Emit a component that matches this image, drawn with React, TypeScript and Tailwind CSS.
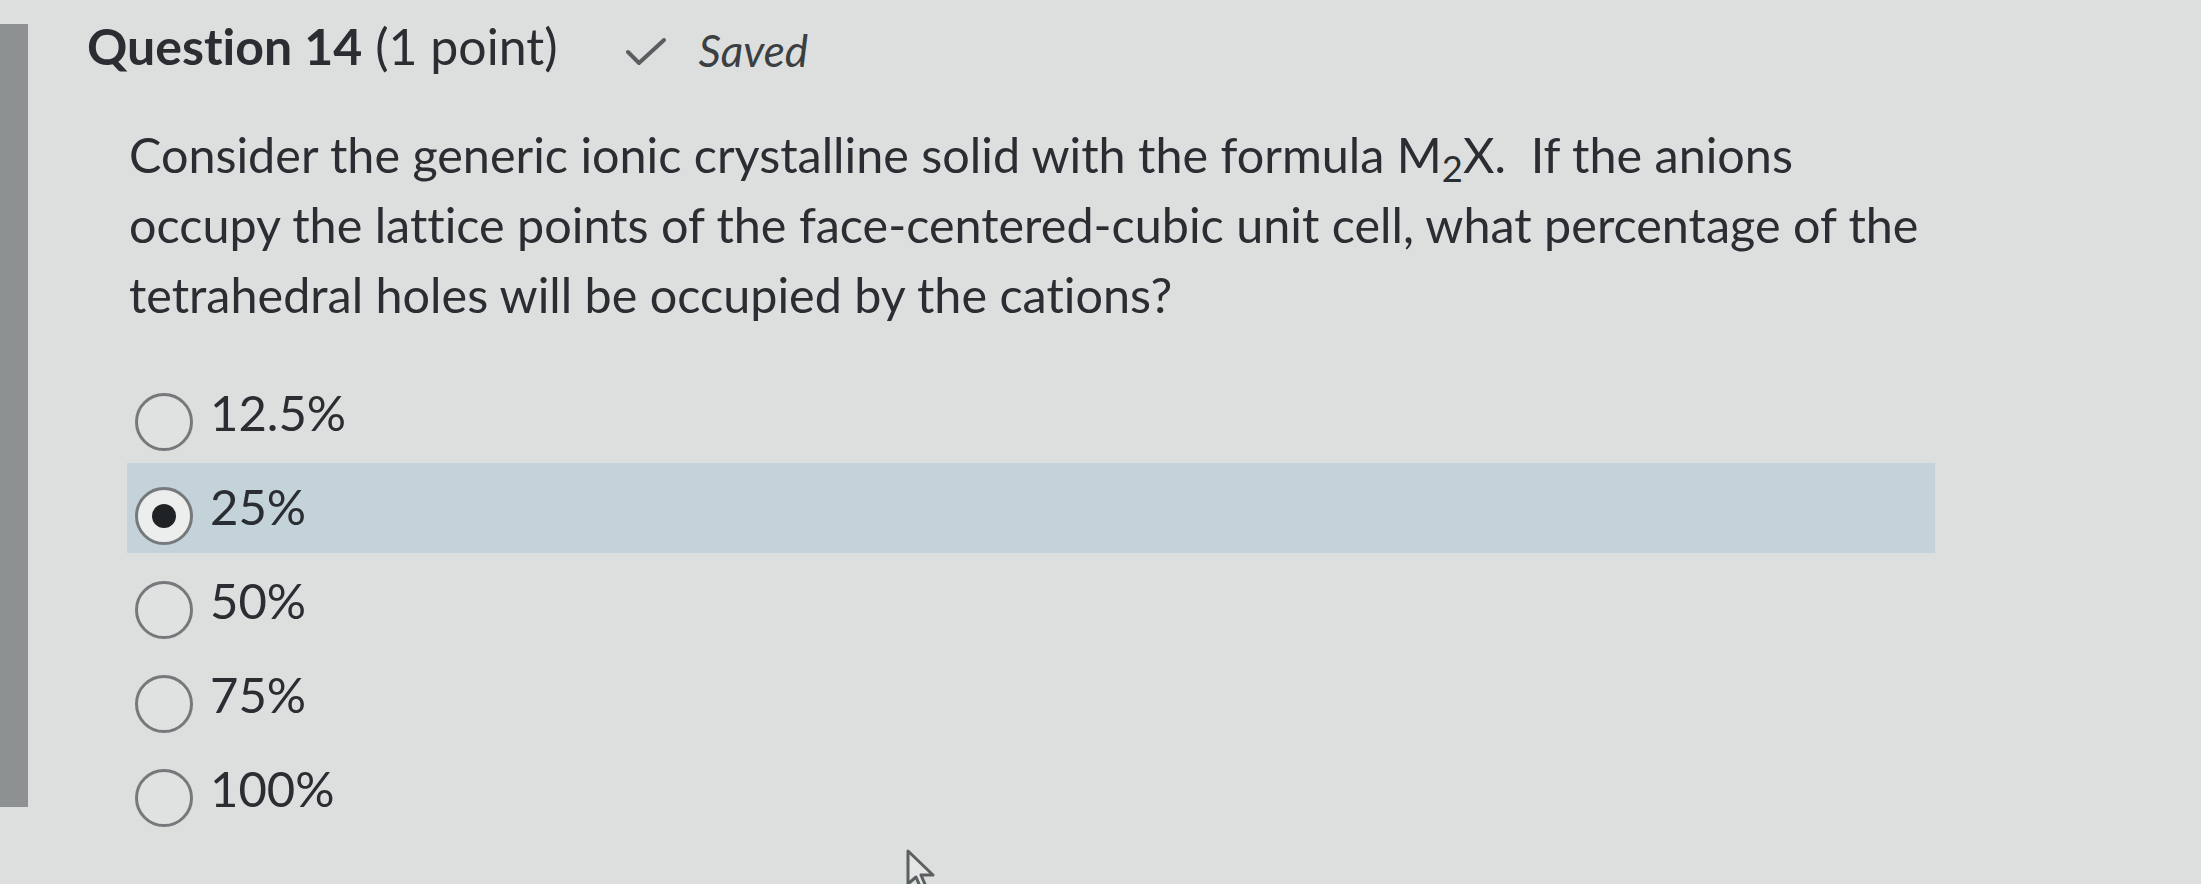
import React from 'react';

const options = ['12.5%', '25%', '50%', '75%', '100%'];
const selected = 1;

function Radio({ checked }: { checked: boolean }) {
  return (
    <span
      className={`mt-[24px] flex h-[58px] w-[58px] shrink-0 items-center justify-center rounded-full border-[3px] border-[#75797b] ${
        checked ? 'bg-[#eceeed]' : 'bg-[#dfe2e1]'
      }`}
    >
      {checked && <span className="h-[24px] w-[24px] rounded-full bg-[#1f2326]" />}
    </span>
  );
}

export default function App() {
  return (
    <div
      className="relative flex h-[884px] w-[2201px] overflow-hidden bg-[#dcdfde] text-[#2a2e32] [font-variant-ligatures:none]"
      style={{ fontFamily: 'Lato, "Noto Sans", sans-serif' }}
    >
      {/* left page edge */}
      <div className="mt-[24px] h-[783px] w-[28px] shrink-0 bg-[#8e9191]" />

      <div className="flex flex-col pl-[59px] pt-[16px]">
        {/* Header */}
        <div className="flex items-start">
          <h2 className="text-[50px] leading-[60px]">
            <span className="font-bold">Question 14</span> <span>(1 point)</span>
          </h2>
          <div className="ml-[68px] flex items-start">
            <svg className="mt-[22px] h-[28px] w-[40px]" viewBox="0 0 40 28" fill="none">
              <path d="M2 14 L13 25 L38 2" stroke="#5a5e61" strokeWidth="4" strokeLinecap="round" strokeLinejoin="round" />
            </svg>
            <span className="ml-[33px] mt-[6px] text-[44px] italic leading-[56px] text-[#3b3f42]">Saved</span>
          </div>
        </div>

        {/* Question body */}
        <div className="ml-[40px] mt-[41px] w-[1900px]">
          <p className="pl-[2px] text-[48.5px] leading-[70px]">
            Consider the generic ionic crystalline solid with the formula M<sub>2</sub>X.&nbsp; If the anions
            <br />
            occupy the lattice points of the face-centered-cubic unit cell, what percentage of the
            <br />
            tetrahedral holes will be occupied by the cations?
          </p>

          {/* Answers */}
          <div className="mt-[40px] flex w-[1808px] flex-col gap-[4px]">
            {options.map((opt, i) => (
              <label
                key={opt}
                className={`flex h-[90px] items-start pl-[8px] ${i === selected ? 'bg-[#c4d3da]' : ''}`}
              >
                <Radio checked={i === selected} />
                <span className="ml-[17px] pt-[13px] text-[49px] leading-[60px]">{opt}</span>
              </label>
            ))}
          </div>
        </div>
      </div>

      {/* mouse pointer */}
      <svg className="absolute left-[905px] top-[848px] h-[48px] w-[32px]" viewBox="0 0 32 48" fill="none">
        <path
          d="M3 3 L3 36 L11 29 L17 43 L22 41 L16 27 L28 27 Z"
          fill="#e4e6e5"
          stroke="#5b5f62"
          strokeWidth="3"
          strokeLinejoin="round"
        />
      </svg>
    </div>
  );
}
